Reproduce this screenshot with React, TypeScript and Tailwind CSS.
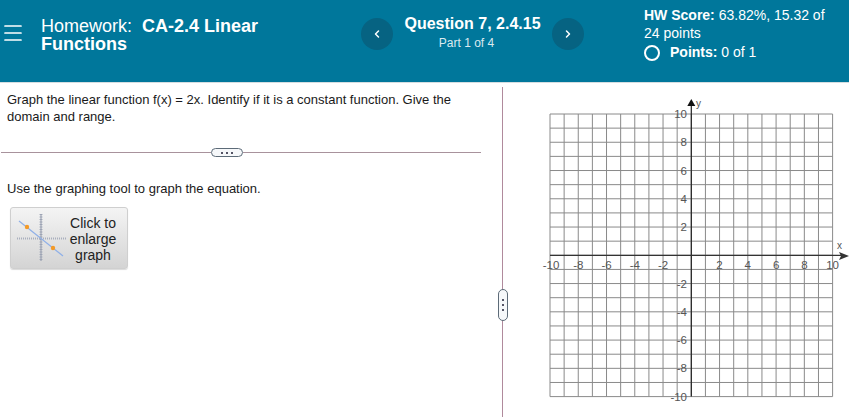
import { Menu, ChevronLeft, ChevronRight } from 'lucide-react';

const CELL = 14.13;
const LEFT = 550;
const TOP = 113;
const TICKS = Array.from({ length: 21 }, (_, i) => i);
const LABELS = [-10, -8, -6, -4, -2, 2, 4, 6, 8, 10];

function xPos(v: number) {
  return LEFT + (v + 10) * CELL;
}

function yPos(v: number) {
  return TOP + (10 - v) * CELL;
}

function Graph() {
  const right = xPos(10);
  const bottom = yPos(-10);
  const ox = xPos(0);
  const oy = yPos(0);

  return (
    <svg className="block h-[335px] w-[346px]" viewBox="503 82 346 335">
      {TICKS.map((i) => (
        <g key={i} stroke="#8a8a8a" strokeWidth="1">
          <line x1={LEFT + i * CELL} y1={TOP} x2={LEFT + i * CELL} y2={bottom} />
          <line x1={LEFT} y1={TOP + i * CELL} x2={right} y2={TOP + i * CELL} />
        </g>
      ))}
      <line x1={ox} y1={100} x2={ox} y2={bottom} stroke="#222" strokeWidth="1.2" />
      <line x1={LEFT} y1={oy} x2={843} y2={oy} stroke="#333" strokeWidth="1.2" />
      <polygon points={`${ox},98 ${ox + 4},105 ${ox - 4},105`} fill="#111" />
      <polygon points={`849,255 839,251 841,255 839,259`} fill="#333" />
      <g fontFamily="'Liberation Sans', Arial, sans-serif" fontSize="11.5" fill="#555">
        <text x={696} y={106} fontSize="10">y</text>
        <text x={837} y={248} fontSize="10">x</text>
        {LABELS.map((v) => (
          <text key={`x${v}`} x={xPos(v) + (v === -10 ? 1 : 0)} y={268} textAnchor="middle">
            {v}
          </text>
        ))}
        {LABELS.map((v) => (
          <text key={`y${v}`} x={687} y={yPos(v) + 4} textAnchor="end">
            {v}
          </text>
        ))}
      </g>
    </svg>
  );
}

function EnlargeIcon() {
  return (
    <svg className="h-[50px] w-[50px] shrink-0" viewBox="17 214 50 50">
      <line x1="41" y1="215" x2="41" y2="262" stroke="#a9afbe" strokeWidth="3" strokeDasharray="1 1.5" />
      <line x1="41" y1="215" x2="41" y2="262" stroke="#8f97aa" strokeWidth="1" />
      <line x1="17" y1="239.5" x2="66" y2="239.5" stroke="#a9afbe" strokeWidth="2" strokeDasharray="1 1" />
      <line x1="19" y1="222" x2="63" y2="257" stroke="#8fb0e8" strokeWidth="1.2" />
      <circle cx="27" cy="228" r="2.2" fill="#f39a28" />
      <circle cx="53" cy="249" r="2.2" fill="#f39a28" />
    </svg>
  );
}

function NavButton({ children }: { children: React.ReactNode }) {
  return (
    <button
      className="flex h-8 w-8 shrink-0 items-center justify-center rounded-full bg-[#066382] text-white"
      type="button"
    >
      {children}
    </button>
  );
}

export default function App() {
  return (
    <div className="relative h-[417px] w-[849px] overflow-hidden bg-white font-['Liberation_Sans',Arial,sans-serif] text-[#1a1a1a]">
      <header className="flex h-[83px] border-b border-[#d5dde0] bg-[#00779b] text-white">
        <div className="w-[41px] shrink-0 pl-px pt-[21px]">
          <Menu className="h-6 w-6" strokeWidth={1.7} />
        </div>
        <h1 className="mt-[17px] w-[320px] shrink-0 pr-[80px] text-lg leading-[18px]">
          Homework:&nbsp; <b>CA-2.4 Linear Functions</b>
        </h1>
        <div className="mt-[18px] flex">
          <NavButton>
            <ChevronLeft className="h-3 w-3" strokeWidth={3} />
          </NavButton>
          <div className="w-[159px] text-center">
            <div className="-mt-[5px] text-base font-bold leading-[22px]">Question 7, 2.4.15</div>
            <div className="pr-[12px] text-xs leading-[17px] text-[#dbeaf0]">Part 1 of 4</div>
          </div>
          <NavButton>
            <ChevronRight className="h-3 w-3" strokeWidth={3} />
          </NavButton>
        </div>
        <div className="ml-[60px] mt-[6px] w-[190px] text-sm leading-[18px]">
          <div>
            <b>HW Score:</b> 63.82%, 15.32 of 24 points
          </div>
          <div className="mt-px flex">
            <span className="mt-[2px] h-4 w-4 rounded-full border-2 border-white" />
            <span className="ml-[10px]">
              <b>Points:</b> 0 of 1
            </span>
          </div>
        </div>
      </header>

      <main className="flex h-[334px]">
        <section className="mt-[4px] w-[503px] shrink-0 border-r border-[#b08a9c]">
          <p className="ml-[7px] mt-[4px] w-[460px] text-[13px] leading-[17px]">
            Graph the linear function f(x) = 2x. Identify if it is a constant function. Give the domain and range.
          </p>
          <div className="ml-[1px] mt-[23px] flex w-[480px] items-center">
            <div className="h-px w-[210px] bg-[#a8929c]" />
            <div className="flex h-[9px] w-[32px] items-center justify-center gap-[3px] rounded-full border border-[#5d6b78] bg-[#f6f8fa]">
              <span className="h-[2px] w-[2px] bg-[#556]" />
              <span className="h-[2px] w-[2px] bg-[#556]" />
              <span className="h-[2px] w-[2px] bg-[#556]" />
            </div>
            <div className="h-px flex-1 bg-[#a8929c]" />
          </div>
          <p className="ml-[7px] mt-[23px] text-[13px] leading-[17px]">Use the graphing tool to graph the equation.</p>
          <button
            className="ml-[10px] mt-[10px] flex h-[62px] w-[118px] items-center rounded-[3px] border border-[#cfcfcf] bg-gradient-to-b from-[#f4f4f4] to-[#d4d4d4] pl-[6px] shadow-[0_1px_1px_rgba(0,0,0,0.15)]"
            type="button"
          >
            <EnlargeIcon />
            <span className="mt-[2px] w-[52px] text-center text-sm leading-4 text-[#222]">Click to enlarge graph</span>
          </button>
        </section>
        <Graph />
      </main>

      <div className="absolute left-[498px] top-[289px] flex h-[32px] w-[10px] flex-col items-center justify-center gap-[3px] rounded-full border border-[#5d6b78] bg-[#f6f8fa]">
        <span className="h-[2px] w-[2px] bg-[#556]" />
        <span className="h-[2px] w-[2px] bg-[#556]" />
        <span className="h-[2px] w-[2px] bg-[#556]" />
      </div>
    </div>
  );
}
